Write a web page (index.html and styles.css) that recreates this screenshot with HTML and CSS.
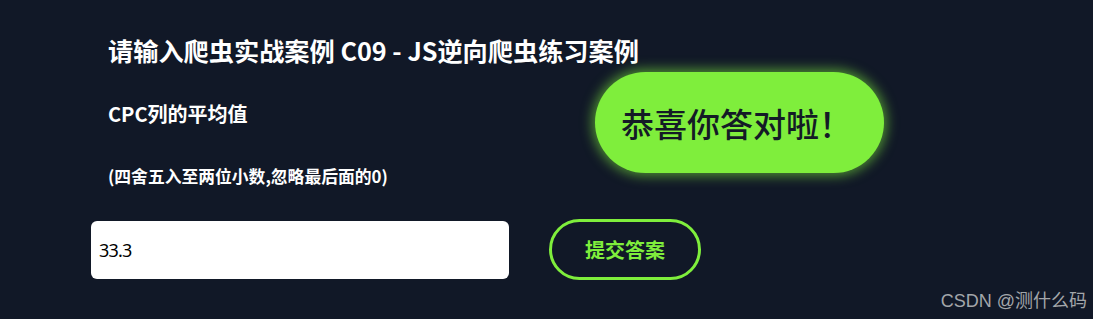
FILE: index.html
```html
<!DOCTYPE html>
<html lang="zh-CN">
<head>
<meta charset="utf-8">
<title>爬虫实战案例 C09</title>
<link rel="stylesheet" href="styles.css">
</head>
<body>
<main class="page">
  <h2 class="title">请输入爬虫实战案例 C09 - JS逆向爬虫练习案例</h2>
  <h3 class="question">CPC列的平均值</h3>
  <p class="hint">(四舍五入至两位小数,忽略最后面的0)</p>
  <form class="answer-row">
    <input class="answer-input" type="text" value="33.3">
    <button class="submit-btn" type="button">提交答案</button>
  </form>
</main>
<div class="toast">恭喜你答对啦！</div>
<div class="watermark">CSDN @测什么码</div>
</body>
</html>
```
FILE: styles.css
```css
html, body {
  margin: 0;
  padding: 0;
  height: 100%;
  background: #111827;
  overflow: hidden;
}
body {
  font-family: "Noto Sans CJK SC", "Noto Sans", sans-serif;
  color: #ffffff;
  position: relative;
}
.page {
  padding: 30px 0 0 91px;
  display: flex;
  flex-direction: column;
}
.title {
  margin: 0;
  padding-left: 17px;
  font-size: 25.2px;
  font-weight: 700;
  line-height: 40px;
}
.question {
  margin: 29px 0 0;
  padding-left: 17px;
  font-size: 20px;
  font-weight: 700;
  line-height: 30px;
}
.hint {
  margin: 34px 0 0;
  padding-left: 17px;
  font-size: 16.8px;
  font-weight: 700;
  line-height: 26px;
}
.answer-row {
  margin: 30px 0 0;
  display: flex;
  align-items: center;
  gap: 40px;
}
.answer-input {
  box-sizing: border-box;
  width: 418px;
  height: 58px;
  border: none;
  border-radius: 6px;
  background: #ffffff;
  padding: 0 8px;
  font-family: "Noto Sans", "Noto Sans CJK SC", sans-serif;
  font-size: 18px;
  color: #000000;
  letter-spacing: -0.8px;
  outline: none;
}
.submit-btn {
  box-sizing: border-box;
  width: 152px;
  height: 61px;
  border: 3px solid #7fee3c;
  border-radius: 31px;
  background: transparent;
  color: #7fee3c;
  font-family: "Noto Sans CJK SC", sans-serif;
  font-size: 20px;
  font-weight: 700;
  cursor: pointer;
}
.toast {
  position: absolute;
  left: 595px;
  top: 72px;
  width: 289px;
  height: 101px;
  border-radius: 51px;
  background: #7fee3c;
  box-shadow: 0 0 12px 3px rgba(127, 238, 60, 0.55);
  color: #141b26;
  font-size: 33px;
  font-weight: 500;
  display: flex;
  align-items: center;
  justify-content: center;
  padding-right: 6px;
  box-sizing: border-box;
}
.watermark {
  position: absolute;
  right: 6px;
  bottom: 7px;
  font-family: "Liberation Sans", "Noto Sans CJK SC", sans-serif;
  font-size: 18px;
  color: #a3a6aa;
}
```
